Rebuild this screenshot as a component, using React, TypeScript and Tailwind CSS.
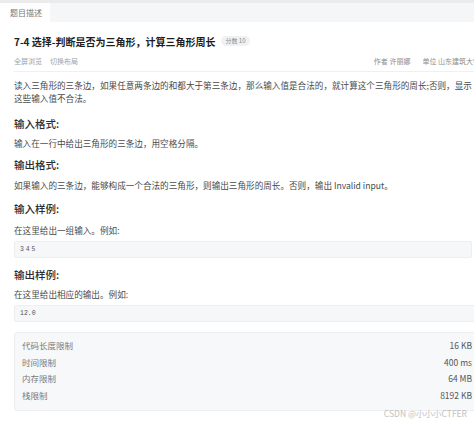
import React from "react";

/* ───────── data ───────── */

const LIMITS = [
  { label: "代码长度限制", value: "16 KB" },
  { label: "时间限制", value: "400 ms" },
  { label: "内存限制", value: "64 MB" },
  { label: "栈限制", value: "8192 KB" },
];

const FONT = { fontFamily: '"Noto Sans CJK SC", "Noto Sans", sans-serif' };

/* ───────── pieces ───────── */

const Heading = ({ children, className = "" }: { children: React.ReactNode; className?: string }) => (
  <h3 className={`text-[10.5px] leading-[14px] font-medium text-[#2e2e2e] ${className}`}>{children}</h3>
);

const Para = ({ children, className = "" }: { children: React.ReactNode; className?: string }) => (
  <p className={`text-[8.6px] leading-[13px] text-[#4a4a4a] whitespace-nowrap ${className}`}>{children}</p>
);

const CodeBlock = ({ code, className = "" }: { code: string; className?: string }) => (
  <pre
    className={`bg-[#f6f7f9] border border-[#eceef1] rounded-[2px] px-[5px] text-[6.5px] leading-[15px] text-[#555] font-[Liberation_Mono,monospace] ${className}`}
  >
    {code}
  </pre>
);

/* ───────── page ───────── */

export default function App() {
  return (
    <div className="relative w-full min-h-[421px] overflow-hidden bg-white" style={FONT}>
      {/* tab strip */}
      <div className="h-[3px] bg-[#ebebeb]" />
      <div className="h-[19px] bg-[#f5f6f8] flex">
        <div className="w-[50px] bg-white flex items-center pl-[10px] text-[8px] text-[#777]">题目描述</div>
      </div>

      <div className="w-[494px] px-[14px]">
        {/* title */}
        <div className="mt-[12px] flex items-center h-[14px]">
          <h1 className="text-[10px] font-bold text-[#1d1d1d] whitespace-nowrap">
            7-4 选择-判断是否为三角形，计算三角形周长
          </h1>
          <span className="ml-[6px] h-[10px] px-[4px] rounded-full bg-[#f0f1f3] text-[6px] leading-[10px] text-[#8a8a8a] whitespace-nowrap">
            分数 10
          </span>
        </div>

        {/* meta row */}
        <div className="mt-[8px] h-[10px] flex items-center justify-between text-[7px] leading-[10px] text-[#a3a3a3] whitespace-nowrap">
          <div className="flex gap-[8px]">
            <span>全屏浏览</span>
            <span>切换布局</span>
          </div>
          <div className="flex gap-[12px] text-[#8c8c8c]">
            <span>作者 许丽娜</span>
            <span>单位 山东建筑大学</span>
          </div>
        </div>

        <div className="mt-[5px] border-t border-[#f0f0f2]" />

        {/* description */}
        <Para className="mt-[7px]">
          读入三角形的三条边，如果任意两条边的和都大于第三条边，那么输入值是合法的，就计算这个三角形的周长;否则，显示
          <br />
          这些输入值不合法。
        </Para>

        <Heading className="mt-[12px]">输入格式:</Heading>
        <Para className="mt-[6px]">输入在一行中给出三角形的三条边，用空格分隔。</Para>

        <Heading className="mt-[8px]">输出格式:</Heading>
        <Para className="mt-[7px]">
          如果输入的三条边，能够构成一个合法的三角形，则输出三角形的周长。否则，输出 Invalid input。
        </Para>

        <Heading className="mt-[10px]">输入样例:</Heading>
        <Para className="mt-[8px]">在这里给出一组输入。例如:</Para>
        <CodeBlock code="3 4 5" className="mt-[4px] mr-[8px] tracking-[-1px]" />

        <Heading className="mt-[10px]">输出样例:</Heading>
        <Para className="mt-[6px]">在这里给出相应的输出。例如:</Para>
        <CodeBlock code="12.0" className="mt-[4px] h-[17px]" />

        {/* limits */}
        <div className="mt-[10px] bg-[#f7f8fa] border border-[#eceef1] rounded-[3px] px-[7px] pt-[4px] pb-[6px]">
          {LIMITS.map((l) => (
            <div key={l.label} className="flex justify-between h-[16.67px] items-center text-[8.5px] whitespace-nowrap">
              <span className="text-[#7a7a7a]">{l.label}</span>
              <span className="text-[#555]">{l.value}</span>
            </div>
          ))}
        </div>
      </div>

      {/* watermark */}
      <span className="absolute right-[7px] bottom-[3px] text-[8.5px] leading-[10px] text-[#c2c2c2] whitespace-nowrap">
        CSDN @小小小CTFER
      </span>
    </div>
  );
}
